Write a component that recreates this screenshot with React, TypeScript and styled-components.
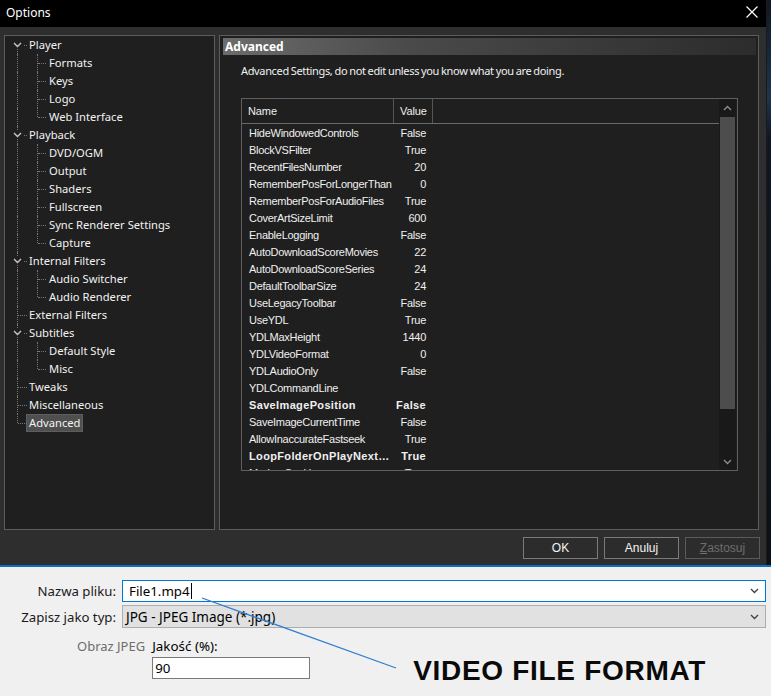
import React from "react";
import styled, { createGlobalStyle } from "styled-components";

const uiFont = `"Noto Sans", "Open Sans", sans-serif`;
const listFont = `"Liberation Sans", Arial, sans-serif`;

type TreeNode = { label: string; children?: string[]; selected?: boolean };

const tree: TreeNode[] = [
  { label: "Player", children: ["Formats", "Keys", "Logo", "Web Interface"] },
  {
    label: "Playback",
    children: ["DVD/OGM", "Output", "Shaders", "Fullscreen", "Sync Renderer Settings", "Capture"],
  },
  { label: "Internal Filters", children: ["Audio Switcher", "Audio Renderer"] },
  { label: "External Filters" },
  { label: "Subtitles", children: ["Default Style", "Misc"] },
  { label: "Tweaks" },
  { label: "Miscellaneous" },
  { label: "Advanced", selected: true },
];

type Setting = { name: string; value: string; bold?: boolean };

const settings: Setting[] = [
  { name: "HideWindowedControls", value: "False" },
  { name: "BlockVSFilter", value: "True" },
  { name: "RecentFilesNumber", value: "20" },
  { name: "RememberPosForLongerThan", value: "0" },
  { name: "RememberPosForAudioFiles", value: "True" },
  { name: "CoverArtSizeLimit", value: "600" },
  { name: "EnableLogging", value: "False" },
  { name: "AutoDownloadScoreMovies", value: "22" },
  { name: "AutoDownloadScoreSeries", value: "24" },
  { name: "DefaultToolbarSize", value: "24" },
  { name: "UseLegacyToolbar", value: "False" },
  { name: "UseYDL", value: "True" },
  { name: "YDLMaxHeight", value: "1440" },
  { name: "YDLVideoFormat", value: "0" },
  { name: "YDLAudioOnly", value: "False" },
  { name: "YDLCommandLine", value: "" },
  { name: "SaveImagePosition", value: "False", bold: true },
  { name: "SaveImageCurrentTime", value: "False" },
  { name: "AllowInaccurateFastseek", value: "True" },
  { name: "LoopFolderOnPlayNextFile", value: "True", bold: true },
  { name: "ModernSeekbar", value: "True" },
];

const Chevron = ({ up }: { up?: boolean }) => (
  <svg width="9" height="6" viewBox="0 0 9 6">
    <path
      d={up ? "M1 5 L4.5 1.5 L8 5" : "M1 1 L4.5 4.5 L8 1"}
      fill="none"
      stroke="currentColor"
      strokeWidth="1.4"
    />
  </svg>
);

const App = () => {
  return (
    <>
      <GlobalStyle />
      <Page>
        <Dialog>
          <TitleBar>
            <Title>Options</Title>
            <CloseButton>
              <svg width="12" height="12" viewBox="0 0 12 12">
                <path d="M0.5 0.5 L11.5 11.5 M11.5 0.5 L0.5 11.5" stroke="#fff" strokeWidth="1.2" />
              </svg>
            </CloseButton>
          </TitleBar>

          <Content>
            <TreePanel>
              {tree.map((node, i) => {
                const last = i === tree.length - 1;
                return (
                  <React.Fragment key={node.label}>
                    <TreeRow>
                      <Rail $v={i === 0 ? "bottom" : last ? "top" : "full"} $h>
                        {node.children && (
                          <Expander>
                            <Chevron />
                          </Expander>
                        )}
                      </Rail>
                      <TreeLabel $selected={node.selected}>{node.label}</TreeLabel>
                    </TreeRow>
                    {node.children?.map((child, j) => (
                      <TreeRow key={child}>
                        <Rail $v="full" />
                        <Rail $v={j === node.children!.length - 1 ? "top" : "full"} $h $short />
                        <TreeLabel>{child}</TreeLabel>
                      </TreeRow>
                    ))}
                  </React.Fragment>
                );
              })}
            </TreePanel>

            <SettingsPanel>
              <PanelHeader>Advanced</PanelHeader>
              <Description>
                Advanced Settings, do not edit unless you know what you are doing.
              </Description>
              <ListBox>
                <ListMain>
                  <ListHeader>
                    <HeaderCell $width={152}>Name</HeaderCell>
                    <HeaderCell $width={39}>Value</HeaderCell>
                  </ListHeader>
                  {settings.map((s) => (
                    <ListRow key={s.name} $bold={s.bold}>
                      <NameCell>{s.name}</NameCell>
                      <ValueCell>{s.value}</ValueCell>
                    </ListRow>
                  ))}
                </ListMain>
                <ScrollBar>
                  <ScrollArrow>
                    <Chevron up />
                  </ScrollArrow>
                  <ScrollTrack>
                    <ScrollThumb />
                  </ScrollTrack>
                  <ScrollArrow>
                    <Chevron />
                  </ScrollArrow>
                </ScrollBar>
              </ListBox>
            </SettingsPanel>
          </Content>

          <ButtonRow>
            <DialogButton>OK</DialogButton>
            <DialogButton>Anuluj</DialogButton>
            <DialogButton $disabled>
              <u>Z</u>astosuj
            </DialogButton>
          </ButtonRow>
        </Dialog>

        <SaveArea>
          <SaveGrid>
            <FieldLabel>Nazwa pliku:</FieldLabel>
            <FileInput>
              <span>
                File1.mp4<Caret />
              </span>
              <DropChevron>
                <Chevron />
              </DropChevron>
            </FileInput>
            <FieldLabel>Zapisz jako typ:</FieldLabel>
            <TypeSelect>
              <span>JPG - JPEG Image (*.jpg)</span>
              <DropChevron>
                <Chevron />
              </DropChevron>
            </TypeSelect>
          </SaveGrid>
          <QualityRow>
            <MutedLabel>Obraz JPEG</MutedLabel>
            <QualityColumn>
              <QualityLabel>Jakość (%):</QualityLabel>
              <QualityInput>90</QualityInput>
            </QualityColumn>
            <Annotation>VIDEO FILE FORMAT</Annotation>
          </QualityRow>
        </SaveArea>

        <Pointer width="771" height="696" viewBox="0 0 771 696">
          <line x1="202" y1="598" x2="396" y2="668" stroke="#2f7fcf" strokeWidth="1.3" />
        </Pointer>
      </Page>
    </>
  );
};

export default App;

const GlobalStyle = createGlobalStyle`
  body {
    margin: 0;
    background: #0d1520;
  }
`;

const Page = styled.div`
  position: relative;
  width: 771px;
  height: 696px;
  overflow: hidden;
  background: linear-gradient(180deg, #101822 0%, #1c3550 14%, #0e1722 20%, #0b0f14 100%);
`;

const Dialog = styled.div`
  display: flex;
  flex-direction: column;
  width: 767px;
  height: 565px;
  background: #2e2e2e;
  border-right: 1px solid #1a1a1a;
  box-sizing: border-box;
`;

const TitleBar = styled.div`
  display: flex;
  align-items: center;
  justify-content: space-between;
  height: 27px;
  flex-shrink: 0;
  background: #000;
  padding: 0 8px 0 6px;
`;

const Title = styled.span`
  font-family: ${uiFont};
  font-size: 12px;
  color: #fff;
  margin-top: -3px;
`;

const CloseButton = styled.span`
  display: flex;
  align-items: center;
  margin-top: -4px;
`;

const Content = styled.div`
  display: flex;
  gap: 4px;
  height: 495px;
  padding: 8px 7px 0 4px;
  flex-shrink: 0;
`;

const TreePanel = styled.div`
  width: 211px;
  height: 495px;
  box-sizing: border-box;
  border: 1px solid #5c5c5c;
  background: #1f1f1f;
  padding-left: 2px;
`;

const TreeRow = styled.div`
  display: flex;
  align-items: center;
  height: 18px;
`;

const Rail = styled.span<{ $v: "full" | "top" | "bottom"; $h?: boolean; $short?: boolean }>`
  position: relative;
  width: 20px;
  height: 18px;
  flex-shrink: 0;

  &::before {
    content: "";
    position: absolute;
    left: 10px;
    top: ${(p) => (p.$v === "bottom" ? "9px" : "0")};
    bottom: ${(p) => (p.$v === "top" ? "9px" : "0")};
    border-left: 1px dotted #777;
  }

  &::after {
    content: "";
    display: ${(p) => (p.$h ? "block" : "none")};
    position: absolute;
    left: 11px;
    right: ${(p) => (p.$short ? "1px" : "0")};
    top: 9px;
    border-top: 1px dotted #777;
  }
`;

const Expander = styled.span`
  position: absolute;
  left: 5px;
  top: 5px;
  width: 11px;
  height: 8px;
  display: flex;
  align-items: center;
  justify-content: center;
  background: #1f1f1f;
  color: #c8c8c8;
  z-index: 1;
`;

const TreeLabel = styled.span<{ $selected?: boolean }>`
  font-family: ${uiFont};
  font-size: 11.2px;
  line-height: 16px;
  color: #f2f2f2;
  padding: 0 2px;
  white-space: nowrap;
  background: ${(p) => (p.$selected ? "#4f4f4f" : "transparent")};
  outline: ${(p) => (p.$selected ? "1px solid #5e5e5e" : "none")};
`;

const SettingsPanel = styled.div`
  flex: 1;
  height: 495px;
  box-sizing: border-box;
  border: 1px solid #5c5c5c;
  background: #1f1f1f;
  padding: 2px 2px 0 3px;
  display: flex;
  flex-direction: column;
`;

const PanelHeader = styled.div`
  height: 17px;
  background: linear-gradient(90deg, #6c6c6c 0%, #4a4a4a 35%, #2c2c2c 100%);
  font-family: ${uiFont};
  font-weight: 700;
  font-size: 12px;
  line-height: 17px;
  color: #fff;
  padding-left: 2px;
`;

const Description = styled.div`
  font-family: ${uiFont};
  font-size: 11px;
  letter-spacing: -0.35px;
  word-spacing: -0.5px;
  line-height: 16px;
  color: #f0f0f0;
  margin: 8px 0 0 18px;
`;

const ListBox = styled.div`
  display: flex;
  width: 497px;
  height: 373px;
  box-sizing: border-box;
  margin: 19px 0 0 18px;
  border: 1px solid #5e5e5e;
  background: #1f1f1f;
  overflow: hidden;
`;

const ListMain = styled.div`
  flex: 1;
  overflow: hidden;
`;

const ListHeader = styled.div`
  display: flex;
  height: 24px;
  border-bottom: 1px solid #6a6a6a;
`;

const HeaderCell = styled.div<{ $width: number }>`
  width: ${(p) => p.$width}px;
  box-sizing: border-box;
  border-right: 1px solid #555;
  font-family: ${listFont};
  font-size: 11px;
  line-height: 24px;
  color: #f0f0f0;
  padding-left: 6px;
  letter-spacing: -0.1px;
`;

const ListRow = styled.div<{ $bold?: boolean }>`
  display: flex;
  height: 17px;
  align-items: center;
  font-family: ${listFont};
  font-size: 11px;
  letter-spacing: ${(p) => (p.$bold ? "0.35px" : "-0.27px")};
  font-weight: ${(p) => (p.$bold ? 700 : 400)};
  color: #f0f0f0;
`;

const NameCell = styled.span`
  width: 152px;
  box-sizing: border-box;
  padding: 0 0 0 7px;
  white-space: nowrap;
  overflow: hidden;
  text-overflow: ellipsis;
`;

const ValueCell = styled.span`
  width: 39px;
  box-sizing: border-box;
  padding-right: 7px;
  text-align: right;
`;

const ScrollBar = styled.div`
  width: 17px;
  display: flex;
  flex-direction: column;
  background: #191919;
  margin-right: 1px;
`;

const ScrollArrow = styled.div`
  height: 17px;
  display: flex;
  align-items: center;
  justify-content: center;
  color: #8c8c8c;
`;

const ScrollTrack = styled.div`
  flex: 1;
  padding: 1px 1px 0 1px;
`;

const ScrollThumb = styled.div`
  height: 292px;
  background: #4d4d4d;
`;

const ButtonRow = styled.div`
  display: flex;
  justify-content: flex-end;
  gap: 6px;
  padding: 7px 6px 0 0;
`;

const DialogButton = styled.div<{ $disabled?: boolean }>`
  width: 75px;
  height: 22px;
  box-sizing: border-box;
  border: 1px solid ${(p) => (p.$disabled ? "#5a5a5a" : "#7a7a7a")};
  background: #2c2c2c;
  display: flex;
  align-items: center;
  justify-content: center;
  font-family: ${listFont};
  font-size: 12px;
  color: ${(p) => (p.$disabled ? "#6e6e6e" : "#f4f4f4")};
`;

const SaveArea = styled.div`
  height: 131px;
  box-sizing: border-box;
  background: #f0f0f0;
  border-top: 2px solid #0a6fc2;
`;

const SaveGrid = styled.div`
  display: grid;
  grid-template-columns: 116px 1fr;
  column-gap: 6px;
  row-gap: 3px;
  padding: 13px 5px 0 0;
  align-items: center;
`;

const FieldLabel = styled.span`
  font-family: ${uiFont};
  font-size: 13.2px;
  color: #1a1a1a;
  text-align: right;
  white-space: nowrap;
`;

const FileInput = styled.div`
  height: 22px;
  box-sizing: border-box;
  border: 1px solid #0078d7;
  background: #fff;
  display: flex;
  align-items: center;
  justify-content: space-between;
  padding: 0 6px 0 6px;
  font-family: ${uiFont};
  font-size: 13.3px;
  color: #000;
`;

const Caret = styled.span`
  display: inline-block;
  width: 1px;
  height: 16px;
  background: #000;
  vertical-align: -3px;
  margin-left: 1px;
`;

const TypeSelect = styled(FileInput)`
  border-color: #adadad;
  background: #e1e1e1;
  padding-left: 3px;
  height: 23px;
  font-size: 13.5px;
`;

const DropChevron = styled.span`
  display: flex;
  color: #444;
`;

const QualityRow = styled.div`
  display: flex;
  align-items: flex-start;
  padding-left: 77px;
  margin-top: 10px;
`;

const MutedLabel = styled.span`
  font-family: ${uiFont};
  font-size: 13px;
  line-height: 16px;
  color: #6d6d6d;
  margin-right: 7px;
  white-space: nowrap;
`;

const QualityColumn = styled.div`
  display: flex;
  flex-direction: column;
  gap: 3px;
`;

const QualityLabel = styled.span`
  font-family: ${uiFont};
  font-size: 13.4px;
  line-height: 16px;
  color: #000;
  white-space: nowrap;
`;

const QualityInput = styled.div`
  width: 158px;
  height: 22px;
  box-sizing: border-box;
  border: 1px solid #7a7a7a;
  background: #fff;
  font-family: ${uiFont};
  font-size: 13.3px;
  line-height: 20px;
  padding-left: 2px;
  color: #000;
`;

const Annotation = styled.span`
  align-self: flex-end;
  margin: 0 0 -7px 103px;
  font-family: ${listFont};
  font-weight: 700;
  font-size: 28px;
  letter-spacing: 0.7px;
  line-height: 30px;
  color: #0a0a0a;
  white-space: nowrap;
`;

const Pointer = styled.svg`
  position: absolute;
  left: 0;
  top: 0;
  pointer-events: none;
`;
